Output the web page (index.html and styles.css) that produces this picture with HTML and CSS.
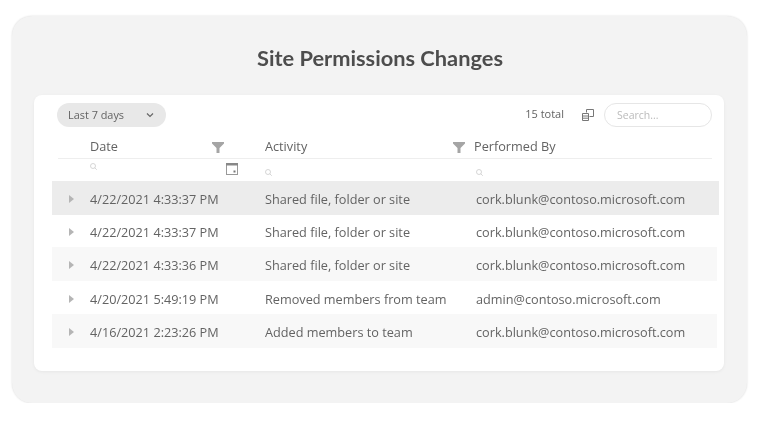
FILE: index.html
```html
<!DOCTYPE html>
<html lang="en">

<head>
    <meta charset="UTF-8">
    <meta name="viewport" content="width=device-width, initial-scale=1.0">
    <title>Site Permissions Changes</title>
    <link rel="stylesheet" href="styles.css">
</head>

<body>
    <main class="panel">
        <h1>Site Permissions Changes</h1>
        <section class="card">
            <div class="toolbar">
                <button class="range">
                    <span>Last 7 days</span>
                    <svg class="chevron" viewBox="0 0 8 6" width="8" height="6"><path d="M1 1.5 4 4.5 7 1.5" fill="none" stroke="#666" stroke-width="1.2"/></svg>
                </button>
                <span class="total">15 total</span>
                <svg class="copy-icon" viewBox="0 0 12 12" width="12" height="12"><path d="M4.5 3.5V.5h7v7H7.5M.5 4.5h6v7h-6zM.5 7h6M.5 9.2h6" fill="none" stroke="#777"/></svg>
                <div class="search">Search...</div>
            </div>

            <div class="head-row">
                <div class="head-cell date-col">
                    <span>Date</span>
                    <svg class="funnel" viewBox="0 0 12 11" width="12" height="11"><path d="M0 0h12v1.5L7.5 6v5h-3V6L0 1.5z" fill="#a5a5a5"/></svg>
                </div>
                <div class="head-cell activity-col">
                    <span>Activity</span>
                    <svg class="funnel" viewBox="0 0 12 11" width="12" height="11"><path d="M0 0h12v1.5L7.5 6v5h-3V6L0 1.5z" fill="#a5a5a5"/></svg>
                </div>
                <div class="head-cell">
                    <span>Performed By</span>
                </div>
            </div>

            <div class="filter-row">
                <div class="filter-cell date-filter">
                    <svg class="lens lens-up" viewBox="0 0 7 7" width="7" height="7"><path d="M3 .5a2.5 2.5 0 1 0 0 5 2.5 2.5 0 0 0 0-5zM4.8 4.8 6.8 6.8" fill="none" stroke="#ccc" stroke-width=".8"/></svg>
                    <svg class="calendar" viewBox="0 0 12 12" width="12" height="12"><rect x=".5" y=".5" width="11" height="11" fill="#fff" stroke="#999"/><path d="M0 0h12v2.5H0z" fill="#888"/><path d="M7.5 7.5h2v2h-2z" fill="#777"/></svg>
                </div>
                <div class="filter-cell">
                    <svg class="lens" viewBox="0 0 7 7" width="7" height="7"><path d="M3 .5a2.5 2.5 0 1 0 0 5 2.5 2.5 0 0 0 0-5zM4.8 4.8 6.8 6.8" fill="none" stroke="#ccc" stroke-width=".8"/></svg>
                </div>
                <div class="filter-cell">
                    <svg class="lens" viewBox="0 0 7 7" width="7" height="7"><path d="M3 .5a2.5 2.5 0 1 0 0 5 2.5 2.5 0 0 0 0-5zM4.8 4.8 6.8 6.8" fill="none" stroke="#ccc" stroke-width=".8"/></svg>
                </div>
            </div>

            <div class="rows">
                <div class="row selected">
                    <span class="caret"></span>
                    <span>4/22/2021 4:33:37 PM</span>
                    <span>Shared file, folder or site</span>
                    <span>cork.blunk@contoso.microsoft.com</span>
                </div>
                <div class="row">
                    <span class="caret"></span>
                    <span>4/22/2021 4:33:37 PM</span>
                    <span>Shared file, folder or site</span>
                    <span>cork.blunk@contoso.microsoft.com</span>
                </div>
                <div class="row striped">
                    <span class="caret"></span>
                    <span>4/22/2021 4:33:36 PM</span>
                    <span>Shared file, folder or site</span>
                    <span>cork.blunk@contoso.microsoft.com</span>
                </div>
                <div class="row">
                    <span class="caret"></span>
                    <span>4/20/2021 5:49:19 PM</span>
                    <span>Removed members from team</span>
                    <span>admin@contoso.microsoft.com</span>
                </div>
                <div class="row striped">
                    <span class="caret"></span>
                    <span>4/16/2021 2:23:26 PM</span>
                    <span>Added members to team</span>
                    <span>cork.blunk@contoso.microsoft.com</span>
                </div>
            </div>
        </section>
    </main>
</body>

</html>
```

FILE: styles.css
```css
*,
*::after,
*::before {
    box-sizing: border-box;
}

body {
    font-family: "Open Sans", "Noto Sans", sans-serif;
    background: #fff;
    color: #636363;
    margin: 0;
    padding: 16px 21px 0 12px;
}

.panel {
    background: #f3f3f3;
    border-radius: 20px;
    box-shadow: 0 0 2px #d8d8d8;
    filter: blur(.35px);
    height: 387px;
    padding: 0 23px 0 22px;

    h1 {
        color: #4d4d4d;
        font-family: Lato, "Open Sans", sans-serif;
        font-size: 21.8px;
        font-weight: 700;
        line-height: 26px;
        margin: 0;
        padding: 29px 0 24px 2px;
        text-align: center;
    }
}

.card {
    background: #fff;
    border-radius: 8px;
    box-shadow: 0 1px 3px #e6e6e6;
    height: 276px;
    padding-top: 8px;
}

.toolbar {
    align-items: center;
    display: flex;
    height: 24px;
    padding: 0 12px 0 23px;
}

.range {
    align-items: center;
    background: #e8e8e8;
    border: 0;
    border-radius: 12px;
    color: #636363;
    display: flex;
    font-family: inherit;
    font-size: 10.9px;
    height: 24px;
    justify-content: space-between;
    padding: 0 12px 1px 11px;
    width: 109px;
}

.total {
    font-size: 11px;
    margin-left: auto;
    padding-bottom: 3px;
}

.copy-icon {
    margin: 0 10px 0 18px;
}

.search {
    align-items: center;
    border: 1px solid #e6e6e6;
    border-radius: 12px;
    color: #bbb;
    display: flex;
    font-size: 10.5px;
    height: 24px;
    padding-left: 12px;
    width: 108px;
}

.head-row,
.filter-row {
    display: grid;
    margin: 0 12px 0 24px;
    padding-left: 32px;
}

.head-row {
    border-bottom: 1px solid #eee;
    font-size: 12.7px;
    grid-template-columns: 175px 209px 1fr;
    height: 32px;
}

.head-cell {
    align-items: center;
    display: flex;
    justify-content: space-between;
    padding-top: 7px;
}

.date-col {
    padding-right: 41px;
}

.activity-col {
    padding-right: 9px;
}

.funnel {
    margin-top: 2px;
}

.filter-row {
    grid-template-columns: 175px 211px 1fr;
    height: 22px;
}

.filter-cell {
    align-items: center;
    display: flex;
    padding-top: 5px;
}

.date-filter {
    justify-content: space-between;
    padding: 0 27px 0 0;
}

.lens-up {
    margin-bottom: 8px;
}

.calendar {
    margin-bottom: 2px;
}

.rows {
    margin: 0 5px 0 18px;
}

.row {
    align-items: center;
    display: grid;
    font-size: 12.7px;
    grid-template-columns: 38px 175px 211px 1fr;
    height: 33px;
    padding-top: 1px;
}

.selected {
    background: #ececec;
    height: 34px;
}

.selected + .row {
    height: 32px;
}

.striped {
    background: #f8f8f8;
    height: 34px;
    margin-right: 2px;
}

.striped + .row {
    padding-top: 2px;
}

.caret {
    border-bottom: 4px solid transparent;
    border-left: 5px solid #b5b5b5;
    border-top: 4px solid transparent;
    height: 0;
    margin-left: 17px;
    width: 0;
}
```
